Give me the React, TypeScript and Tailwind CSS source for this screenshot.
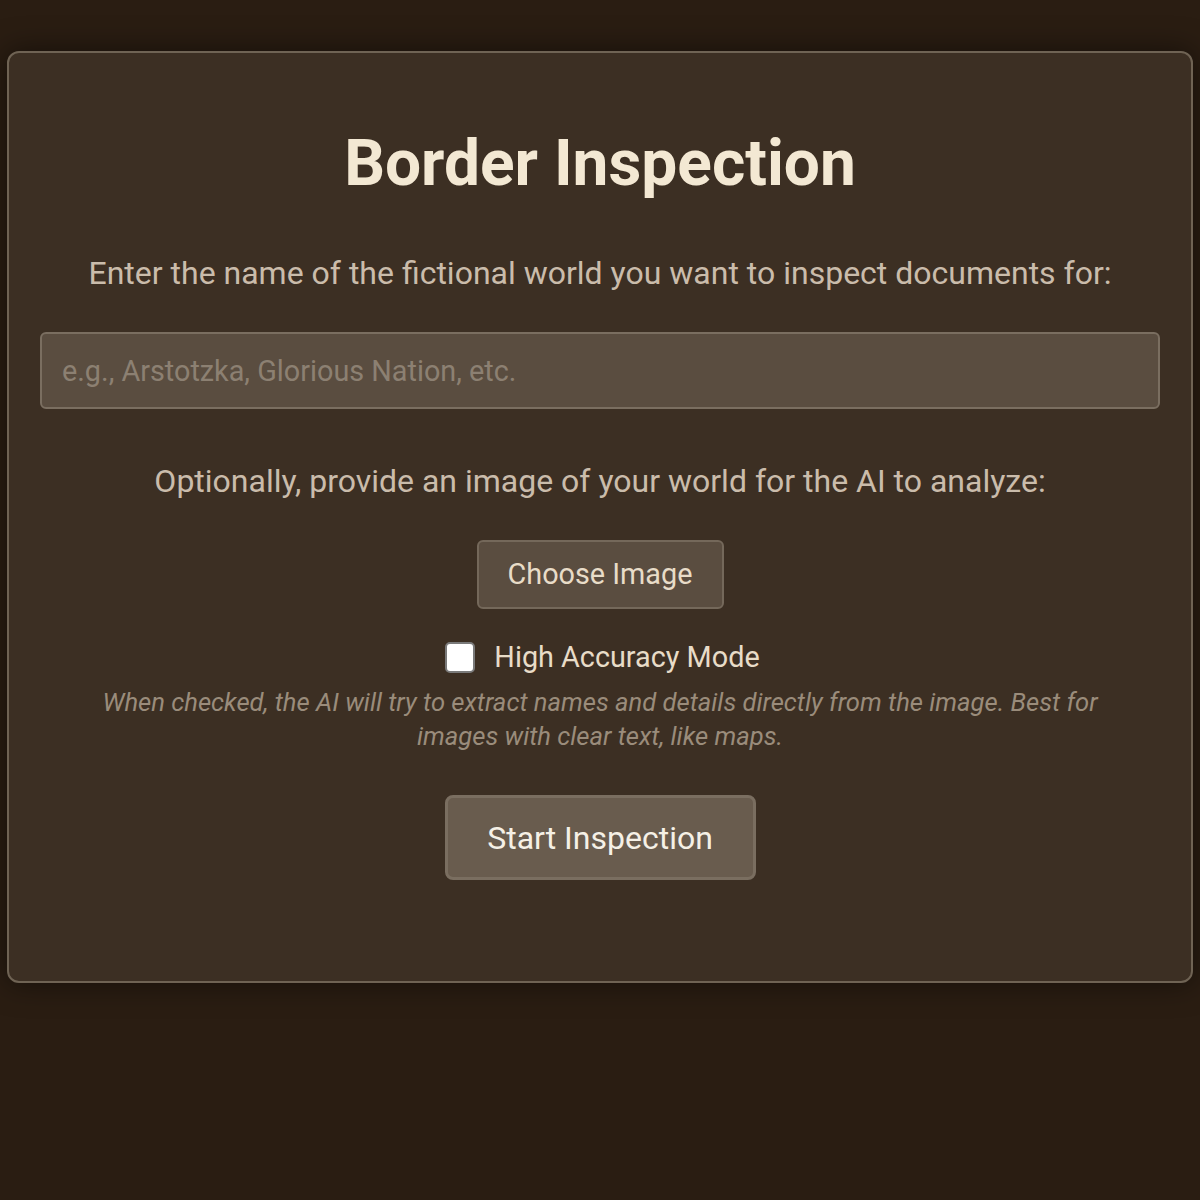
import React from "react";

export default function App() {
  return (
    <div
      className="min-h-[1200px] w-full bg-[#2a1d12] pt-[51px] px-[7px]"
      style={{ fontFamily: "Roboto, 'Liberation Sans', sans-serif" }}
    >
      <div className="w-full h-[932px] rounded-[12px] border-2 border-[#6f6354] bg-[#3c2f23] shadow-[0_0_30px_rgba(0,0,0,0.5)] px-[31px] pt-[71px] flex flex-col items-center">
        <h1 className="text-[64px] leading-[80px] font-bold text-[#f3e8d3]">Border Inspection</h1>
        <p className="mt-[49px] text-[32px] leading-[40px] text-[#cabcab]">
          Enter the name of the fictional world you want to inspect documents for:
        </p>
        <input
          type="text"
          placeholder="e.g., Arstotzka, Glorious Nation, etc."
          className="mt-[39px] w-full h-[77px] rounded-[6px] border-2 border-[#7a6e60] bg-[#5a4d40] px-[20px] text-[28.8px] text-[#e8dcc8] placeholder:text-[#8c8072] outline-none"
        />
        <p className="mt-[52px] text-[32px] leading-[40px] text-[#cabcab]">
          Optionally, provide an image of your world for the AI to analyze:
        </p>
        <button className="mt-[39px] w-[247px] h-[69px] rounded-[6px] border-2 border-[#74685a] bg-[#5a4d40] text-[28.8px] text-[#e8dcc8]">
          Choose Image
        </button>
        <label className="mt-[31px] flex items-center gap-[19px] text-[28.8px] text-[#e8dcc8] leading-[34px]">
          <span className="ml-[5px] w-[30px] h-[31px] rounded-[5px] border-2 border-[#7a7a7a] bg-white inline-block" />
          <span>High Accuracy Mode</span>
        </label>
        <p className="mt-[11px] max-w-[1040px] text-center italic text-[25.6px] leading-[34px] text-[#9a8c7b]">
          When checked, the AI will try to extract names and details directly from the image. Best for images with clear text, like maps.
        </p>
        <button className="mt-[42px] w-[311px] h-[85px] rounded-[8px] border-[3px] border-[#7a6e60] bg-[#695c4e] text-[32px] text-[#f5f0e6]">
          Start Inspection
        </button>
      </div>
    </div>
  );
}
